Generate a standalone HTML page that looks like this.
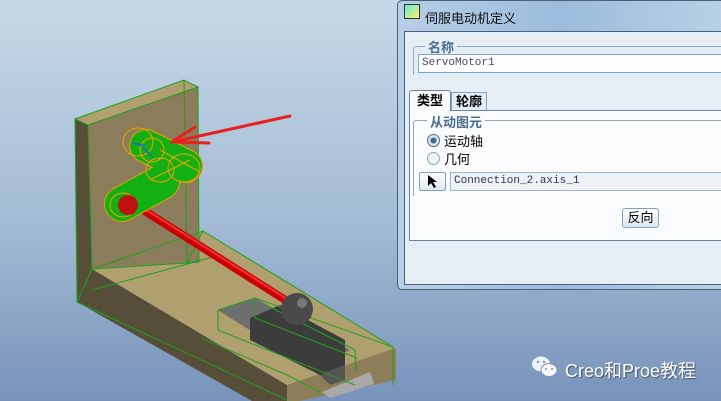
<!DOCTYPE html>
<html><head><meta charset="utf-8"><style>
body{margin:0;width:721px;height:401px;overflow:hidden;position:relative;font-family:"Liberation Sans","Noto Sans CJK SC",sans-serif;background:linear-gradient(#c6d9e8,#a3bbd4 55%,#7893bb);}
.a{position:absolute}
.cn{font-family:"Liberation Sans","Noto Sans CJK SC",sans-serif}
.mono{font-family:"Liberation Mono",monospace}
</style></head><body>
<svg class="a" style="left:0;top:0" width="721" height="401">
<polygon points="77,302 92,269 287,385 287,401 252,401" fill="#564e38"/>
<polygon points="92,269 203,231 396,348 330,378 287,385" fill="#b0a070"/>
<polygon points="287,385 396,348 396,380 300,401 287,401" fill="#8c7e58"/>
<polygon points="75,119 88,125 92,269 77,302" fill="#564e38"/>
<polygon points="88,125 198,87 199,262 92,269" fill="#8b7c5b"/>
<polygon points="75,119 184,80 198,87 88,125" fill="#b0a070"/>
<g stroke="#1fa01f" stroke-width="1" fill="none">
<polyline points="75,119 184,80 198,87 88,125 75,119 77,302 92,269"/>
<polyline points="88,125 92,269 187,263 199,262 198,87"/>
<line x1="184" y1="80" x2="187" y2="263"/>
<polyline points="77,302 287,400"/>
<polyline points="92,269 203,231 393,347 393,385"/>
<polyline points="187,263 203,231"/>
<polyline points="92,290 220,255"/>
</g>
<polygon points="218,310 255,298 350,350 310,368" fill="#6e6e6e"/>
<polygon points="250,318 280,305 345,340 345,365 320,375 250,340" fill="#3c3c3c"/>
<polygon points="320,375 345,365 345,380 330,385" fill="#555"/>
<polygon points="322,392 370,372 374,384 330,398" fill="#a9a9a9"/>
<g stroke="#1fa01f" stroke-width="1" fill="none">
<polyline points="218,310 255,298 393,347"/>
<polyline points="218,310 218,330 355,385"/>
<polyline points="201,338 287,375 320,392"/>
<polyline points="255,298 255,318 357,358"/>
<polyline points="266,305 355,350 356,372"/>
</g>
<line x1="140" y1="208" x2="290" y2="303" stroke="#c00" stroke-width="8"/>
<line x1="140" y1="206" x2="290" y2="301" stroke="#e33" stroke-width="2"/>
<circle cx="297" cy="309" r="16" fill="#4a4a4a"/>
<circle cx="302" cy="303" r="5" fill="#8a8a8a" opacity=".7"/>
<!-- links -->
<g stroke-linecap="round" fill="none">
<line x1="122" y1="204" x2="162" y2="182" stroke="#f0a000" stroke-width="36"/>
<line x1="146" y1="146" x2="186" y2="166" stroke="#f0a000" stroke-width="34"/>
<line x1="122" y1="204" x2="162" y2="182" stroke="#12b012" stroke-width="34"/>
<line x1="146" y1="146" x2="186" y2="166" stroke="#12b012" stroke-width="32"/>
</g>
<g fill="none" stroke="#f0a000" stroke-width="1">
<ellipse cx="138" cy="142" rx="15" ry="14"/><ellipse cx="152" cy="150" rx="12" ry="12"/>
<ellipse cx="184" cy="168" rx="16" ry="14"/><ellipse cx="160" cy="170" rx="14" ry="12"/>
<ellipse cx="123" cy="205" rx="13" ry="12"/><path d="M150,180 L190,160 M160,150 L200,172"/>
</g>
<ellipse cx="128" cy="205" rx="10" ry="10" fill="#c01010"/>
<path d="M133,143 L145,146 M143,148 L152,156" stroke="#2060e0" stroke-width="1.5"/>
<g stroke="#e82020" stroke-width="3" stroke-linecap="round">
<line x1="290" y1="116" x2="172" y2="142"/>
<line x1="172" y1="142" x2="195" y2="127"/>
<line x1="172" y1="142" x2="209" y2="143"/>
</g>
</svg>

<div class="a" style="left:397px;top:0;width:330px;height:290px;border:1px solid #4a5f78;border-radius:5px;background:linear-gradient(90deg,#b7cfe6,#9bbcdc 50%,#b9d0e6);box-sizing:border-box"></div>
<div class="a" style="left:404px;top:4px;width:14px;height:13px;border:1px solid #333;background:linear-gradient(135deg,#6ed,#fe6)"></div>
<div class="a cn" style="left:425px;top:8px;font-size:13px;color:#111">伺服电动机定义</div>
<div class="a" style="left:404px;top:31px;width:330px;height:254px;border:1px solid #4a5f78;background:#e6eef5;box-sizing:border-box"></div>
<div class="a" style="left:413px;top:46px;width:320px;height:28px;border-top:1px solid #8fa8c2;border-left:1px solid #8fa8c2;border-radius:3px 0 0 0"></div>
<div class="a cn" style="left:425px;top:37px;padding:0 3px;background:#e6eef5;font-size:13px;font-weight:bold;color:#4a6d91">名称</div>
<div class="a mono" style="left:418px;top:54px;width:310px;height:19px;border:1px solid #7fa3c4;background:#fff;box-sizing:border-box;font-size:11px;line-height:17px;padding-left:3px;color:#4a4a6a">ServoMotor1</div>
<div class="a" style="left:409px;top:110px;width:320px;height:131px;border:1px solid #6a85a3;background:#fbfcfe;box-sizing:border-box"></div>
<div class="a cn" style="left:409px;top:90px;width:42px;height:21px;border:1px solid #6a85a3;border-bottom:none;background:#fbfcfe;box-sizing:border-box;font-size:13px;font-weight:bold;text-align:center;line-height:20px;border-radius:3px 3px 0 0">类型</div>
<div class="a cn" style="left:451px;top:92px;width:36px;height:18px;border:1px solid #7fa3c4;border-bottom:none;background:#e4edf6;box-sizing:border-box;font-size:13px;font-weight:bold;text-align:center;line-height:17px">轮廓</div>
<div class="a" style="left:413px;top:120px;width:320px;height:75px;border-top:1px solid #8fa8c2;border-left:1px solid #8fa8c2;border-radius:3px 0 0 0"></div>
<div class="a cn" style="left:427px;top:112px;padding:0 3px;background:#fbfcfe;font-size:13px;font-weight:bold;color:#4a6d91">从动图元</div>
<div class="a" style="left:427px;top:134px;width:11px;height:11px;border:1px solid #567;border-radius:50%;background:radial-gradient(#356 0,#4a7aa0 35%,#dfe8f2 45%)"></div>
<div class="a cn" style="left:444px;top:131px;font-size:13px">运动轴</div>
<div class="a" style="left:427px;top:152px;width:11px;height:11px;border:1px solid #8aa;border-radius:50%;background:#eef3f7"></div>
<div class="a cn" style="left:444px;top:149px;font-size:13px">几何</div>
<div class="a" style="left:419px;top:172px;width:27px;height:19px;border:1px solid #7fa3c4;border-radius:2px;background:linear-gradient(#fff,#dde8f2);box-sizing:border-box"></div>
<svg class="a" style="left:427px;top:174px" width="12" height="15"><path d="M1,1 L1,12 L4,9 L7,14 L9,13 L6,8 L10,8Z" fill="#000"/></svg>
<div class="a mono" style="left:450px;top:172px;width:280px;height:19px;border:1px solid #9db5cc;background:#eef2f5;box-sizing:border-box;font-size:11px;line-height:17px;padding-left:3px;color:#335">Connection_2.axis_1</div>
<div class="a cn" style="left:622px;top:208px;width:37px;height:20px;border:1px solid #7fa3c4;border-radius:3px;background:linear-gradient(#fff,#dde8f2);box-sizing:border-box;font-size:13px;text-align:center;line-height:18px">反向</div>

<svg class="a" style="left:531px;top:355px" width="30" height="26">
<ellipse cx="10" cy="9" rx="9" ry="7.5" fill="#eef2f7"/>
<ellipse cx="18" cy="15" rx="8" ry="6.5" fill="#f5f7fa" stroke="#7a94b8" stroke-width="1"/>
<circle cx="7" cy="7" r="1.2" fill="#7a94b8"/><circle cx="13" cy="7" r="1.2" fill="#7a94b8"/>
<circle cx="15" cy="14" r="1" fill="#7a94b8"/><circle cx="21" cy="14" r="1" fill="#7a94b8"/>
</svg>
<div class="a cn" style="left:565px;top:357px;font-size:18px;color:#fff;text-shadow:1px 1px 1px #456">Creo和Proe教程</div>
</body></html>
